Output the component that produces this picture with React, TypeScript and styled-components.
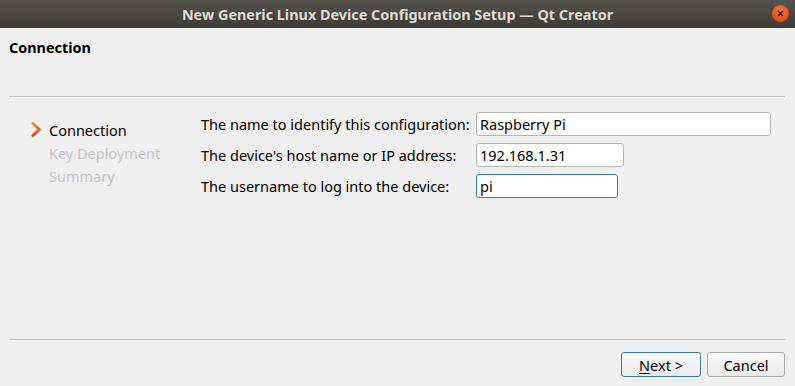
import React, { FC } from "react";
import styled, { createGlobalStyle } from "styled-components";

const GlobalStyle = createGlobalStyle`
  html, body {
    margin: 0;
    padding: 0;
    background: #efefef;
  }
  body {
    font-family: "Noto Sans", "Open Sans", sans-serif;
  }
`;

const Window = styled.div`
  width: 795px;
  height: 386px;
  display: flex;
  flex-direction: column;
  background: #efefef;
  overflow: hidden;
`;

const TitleBar = styled.div`
  position: relative;
  height: 28px;
  flex: none;
  display: flex;
  align-items: center;
  justify-content: center;
  background: linear-gradient(#55534e, #3c3b37);
  color: #dfdbd2;
  font-size: 14.4px;
  font-weight: bold;
`;

const CloseButton = styled.div`
  position: absolute;
  right: 6px;
  top: 5px;
  width: 17px;
  height: 17px;
  border-radius: 50%;
  background: radial-gradient(circle at 50% 35%, #f27a4a, #e0501c 70%, #c8431a);
  display: flex;
  align-items: center;
  justify-content: center;
`;

const Body = styled.div`
  flex: 1;
  display: flex;
  flex-direction: column;
  padding: 0 10px 0 9px;
`;

const PageTitle = styled.div`
  height: 40px;
  padding-top: 10px;
  box-sizing: border-box;
  font-size: 14.4px;
  font-weight: bold;
  color: #000;
`;

const Divider = styled.div<{ top: number }>`
  height: 1px;
  background: #c2c2c2;
  margin-top: ${p => p.top}px;
  flex: none;
`;

const Content = styled.div`
  display: flex;
  padding-top: 15px;
`;

const SideNav = styled.div`
  width: 192px;
  flex: none;
  display: flex;
  flex-direction: column;
  padding-top: 6px;
  padding-left: 22px;
  box-sizing: border-box;
`;

const NavItem = styled.div<{ active?: boolean }>`
  display: flex;
  align-items: center;
  height: 23px;
  font-size: 14.5px;
  color: ${p => (p.active ? "#000" : "#c4c4c4")};
`;

const Marker = styled.span`
  width: 18px;
  flex: none;
  display: flex;
  align-items: center;
`;

const Form = styled.div`
  display: grid;
  grid-template-columns: 275px auto;
  row-gap: 7px;
  align-items: center;
`;

const Label = styled.label`
  font-size: 14.5px;
  color: #000;
  white-space: nowrap;
`;

const Input = styled.div<{ w: number; focused?: boolean }>`
  width: ${p => p.w}px;
  height: 24px;
  box-sizing: border-box;
  background: #fff;
  border: 1px solid ${p => (p.focused ? "#3a78b0" : "#b6b6b6")};
  border-radius: 3px;
  display: flex;
  align-items: center;
  padding-left: 3px;
  font-size: 14.5px;
  color: #000;
`;

const Spacer = styled.div`
  flex: 1;
`;

const ButtonRow = styled.div`
  display: flex;
  justify-content: flex-end;
  gap: 6px;
  padding: 12px 0 9px;
`;

const Button = styled.div<{ w: number; primary?: boolean }>`
  width: ${p => p.w}px;
  height: 25px;
  box-sizing: border-box;
  border: 1px solid ${p => (p.primary ? "#3a78b0" : "#ababab")};
  border-radius: 3px;
  background: linear-gradient(#fbfbfb, #e9e9e9);
  display: flex;
  align-items: center;
  justify-content: center;
  font-size: 14.5px;
  color: #000;

  u {
    text-decoration: underline;
    text-underline-offset: 2px;
  }
`;

const Chevron: FC = () => (
  <svg width="11" height="15" viewBox="0 0 11 15">
    <defs>
      <linearGradient id="chev" x1="0" y1="0" x2="0" y2="1">
        <stop offset="0" stopColor="#f08a45" />
        <stop offset="1" stopColor="#d24d17" />
      </linearGradient>
    </defs>
    <path d="M2 1.5 L8.5 7.5 L2 13.5" fill="none" stroke="url(#chev)" strokeWidth="3" strokeLinecap="round" strokeLinejoin="round" />
  </svg>
);

const fields = [
  { label: "The name to identify this configuration:", value: "Raspberry Pi", w: 295 },
  { label: "The device's host name or IP address:", value: "192.168.1.31", w: 148 },
  { label: "The username to log into the device:", value: "pi", w: 142, focused: true },
];

const steps = ["Connection", "Key Deployment", "Summary"];

const App: FC = () => (
  <Window>
    <GlobalStyle />
    <TitleBar>
      New Generic Linux Device Configuration Setup — Qt Creator
      <CloseButton>
        <svg width="7" height="7" viewBox="0 0 7 7">
          <path d="M1 1 L6 6 M6 1 L1 6" stroke="#3a1a0e" strokeWidth="1.3" />
        </svg>
      </CloseButton>
    </TitleBar>
    <Body>
      <PageTitle>Connection</PageTitle>
      <Divider top={28} />
      <Content>
        <SideNav>
          {steps.map((s, i) => (
            <NavItem key={s} active={i === 0}>
              <Marker>{i === 0 && <Chevron />}</Marker>
              {s}
            </NavItem>
          ))}
        </SideNav>
        <Form>
          {fields.map(f => (
            <React.Fragment key={f.label}>
              <Label>{f.label}</Label>
              <Input w={f.w} focused={f.focused}>{f.value}</Input>
            </React.Fragment>
          ))}
        </Form>
      </Content>
      <Spacer />
      <Divider top={0} />
      <ButtonRow>
        <Button w={80} primary>
          <u>N</u>ext &gt;
        </Button>
        <Button w={78}>Cancel</Button>
      </ButtonRow>
    </Body>
  </Window>
);

export default App;
